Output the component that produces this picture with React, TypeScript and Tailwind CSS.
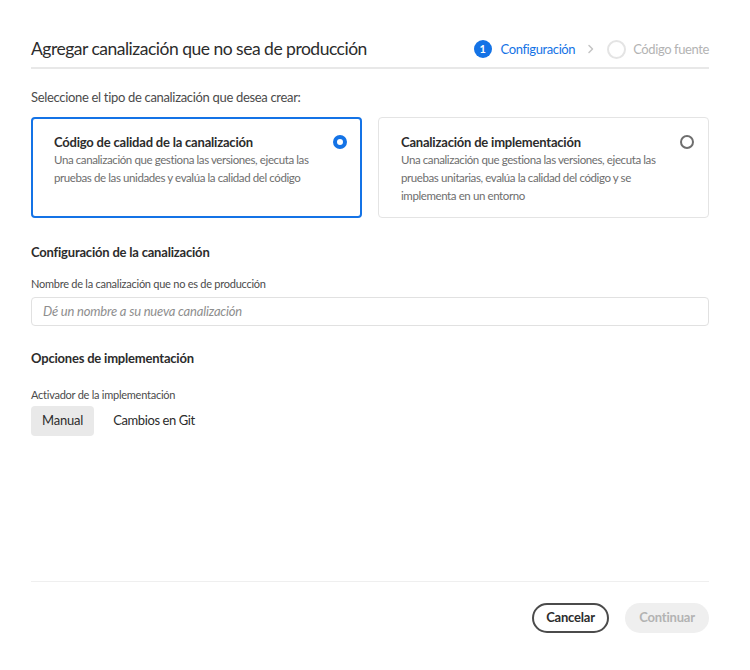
import React from "react";

export default function App() {
  return (
    <div className="w-[750px] h-[670px] bg-white font-['Lato',sans-serif] text-[#2c2c2c] flex flex-col pl-[31px] pr-[41px]">
      {/* Header */}
      <div className="flex items-center justify-between pt-[36px] pb-[5px] border-b-2 border-[#e8e8e8]">
        <h1 className="text-[17.5px] leading-[26px] tracking-[-0.5px] text-[#2c2c2c]">Agregar canalización que no sea de producción</h1>
        <div className="flex items-center text-[13px] leading-[18px] tracking-[-0.4px]">
          <span className="w-[18px] h-[18px] rounded-full bg-[#1473e6] text-white text-[11px] font-bold flex items-center justify-center tracking-normal">1</span>
          <span className="ml-[9px] text-[#1473e6]">Configuración</span>
          <svg className="ml-[12px]" width="8" height="10" viewBox="0 0 8 10" fill="none">
            <path d="M2 1.5L5.5 5L2 8.5" stroke="#c4c4c4" strokeWidth="1.5" strokeLinecap="round" strokeLinejoin="round" />
          </svg>
          <span className="ml-[12px] w-[19px] h-[19px] rounded-full border-2 border-[#e4e4e4]"></span>
          <span className="ml-[7px] text-[#b3b3b3]">Código fuente</span>
        </div>
      </div>

      <p className="mt-[19px] text-[13px] leading-[18px] tracking-[-0.32px] text-[#4b4b4b]">Seleccione el tipo de canalización que desea crear:</p>

      {/* Cards */}
      <div className="mt-[11px] grid grid-cols-2 gap-[16px]">
        <div className="h-[101px] rounded-[4px] border-2 border-[#1473e6] pl-[21px] pr-[13px] pt-[13px] flex items-start justify-between">
          <div>
            <div className="text-[13px] leading-[20px] font-bold tracking-[-0.2px] text-[#2c2c2c]">Código de calidad de la canalización</div>
            <div className="text-[11.5px] leading-[18px] tracking-[-0.4px] text-[#6e6e6e] mt-[-1px] whitespace-nowrap">
              Una canalización que gestiona las versiones, ejecuta las
              <br />
              pruebas de las unidades y evalúa la calidad del código
            </div>
          </div>
          <span className="mt-[3px] shrink-0 w-[14px] h-[14px] rounded-full border-[4px] border-[#1473e6] bg-white"></span>
        </div>
        <div className="h-[101px] rounded-[4px] border border-[#e4e4e4] pl-[22px] pr-[14px] pt-[14px] flex items-start justify-between">
          <div>
            <div className="text-[13px] leading-[20px] font-bold tracking-[-0.2px] text-[#2c2c2c]">Canalización de implementación</div>
            <div className="text-[11.5px] leading-[18px] tracking-[-0.4px] text-[#6e6e6e] mt-[-1px] whitespace-nowrap">
              Una canalización que gestiona las versiones, ejecuta las
              <br />
              pruebas unitarias, evalúa la calidad del código y se
              <br />
              implementa en un entorno
            </div>
          </div>
          <span className="mt-[3px] shrink-0 w-[14px] h-[14px] rounded-full border-2 border-[#6e6e6e] bg-white"></span>
        </div>
      </div>

      {/* Config */}
      <h2 className="mt-[24px] text-[13px] leading-[20px] font-bold tracking-[-0.2px]">Configuración de la canalización</h2>
      <label className="mt-[14px] text-[11px] leading-[16px] tracking-[-0.25px] text-[#4b4b4b]">Nombre de la canalización que no es de producción</label>
      <div className="mt-[5px] h-[29px] rounded-[4px] border border-[#e1e1e1] flex items-center pl-[11px]">
        <span className="text-[13px] italic tracking-[-0.2px] text-[#8e8e8e]">Dé un nombre a su nueva canalización</span>
      </div>

      <h2 className="mt-[22px] text-[13px] leading-[20px] font-bold tracking-[-0.2px]">Opciones de implementación</h2>
      <label className="mt-[19px] text-[11px] leading-[16px] tracking-[-0.25px] text-[#4b4b4b]">Activador de la implementación</label>
      <div className="mt-[3px] flex items-center gap-[7px]">
        <span className="h-[30px] px-[11px] rounded-[4px] bg-[#e9e9e9] flex items-center text-[13px] tracking-[-0.2px] text-[#2c2c2c]">Manual</span>
        <span className="h-[30px] px-[12px] rounded-[4px] flex items-center text-[13px] tracking-[-0.4px] text-[#2c2c2c]">Cambios en Git</span>
      </div>

      <div className="flex-1"></div>

      {/* Footer */}
      <div className="border-t border-[#efefef] pt-[21px] pb-[37px] flex justify-end gap-[16px]">
        <button className="h-[30px] w-[77px] rounded-full border-2 border-[#4b4b4b] text-[13px] font-bold tracking-[-0.2px] text-[#2c2c2c] flex items-center justify-center">Cancelar</button>
        <button className="h-[30px] w-[84px] rounded-full bg-[#efefef] text-[13px] font-bold tracking-[-0.2px] text-[#b3b3b3] flex items-center justify-center">Continuar</button>
      </div>
    </div>
  );
}
